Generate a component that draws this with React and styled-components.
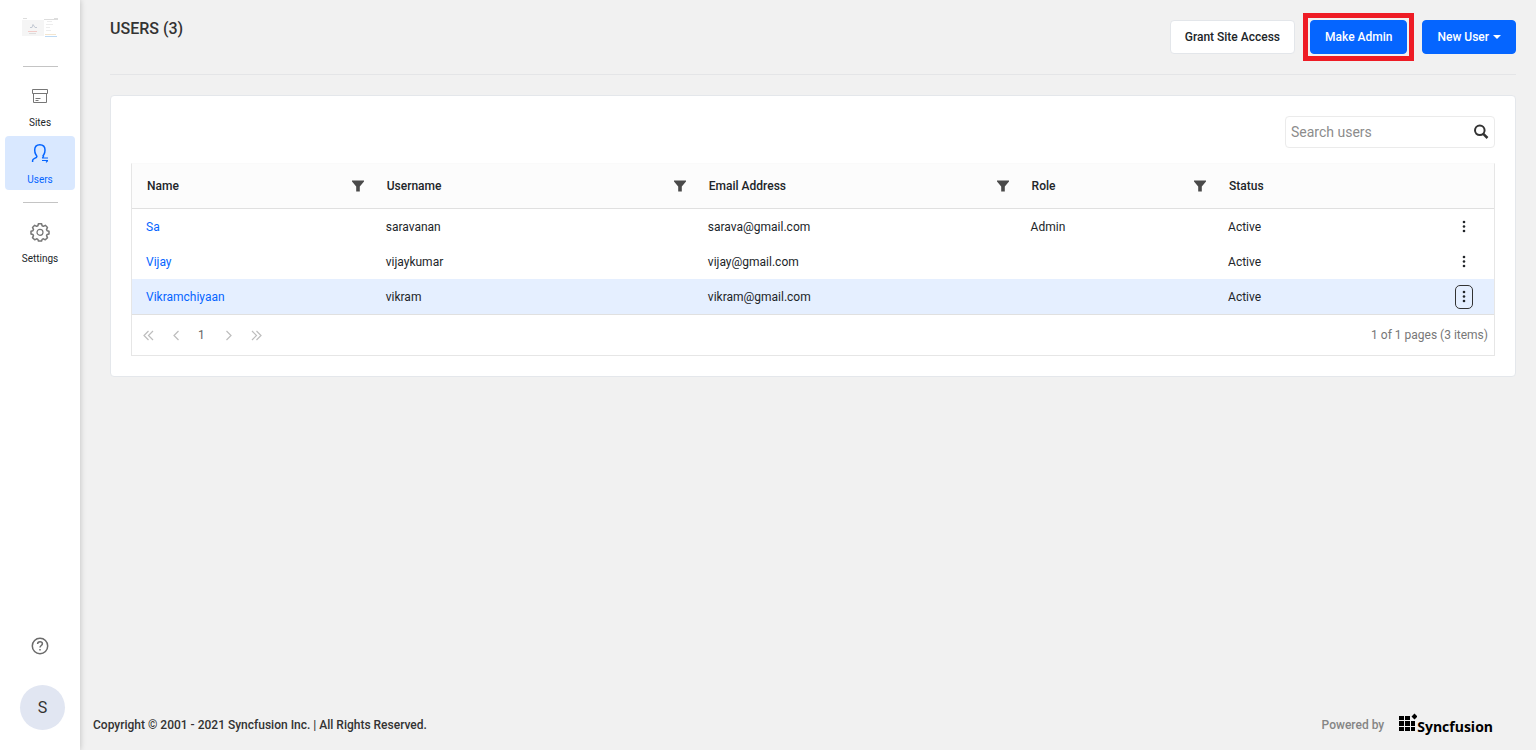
import React from "react";
import styled, { createGlobalStyle, css } from "styled-components";

const GlobalStyle = createGlobalStyle`
  *, *::before, *::after { box-sizing: border-box; }
  body {
    margin: 0;
    background: #fff;
    color: #212529;
    font-family: Roboto, "Liberation Sans", sans-serif;
    font-size: 12px;
    line-height: 16px;
  }
  button, input { font-family: inherit; }
`;

const Shell = styled.div`
  display: flex;
  min-height: calc(100vh - 3px);
  background: #f1f1f1;
`;

const Sidebar = styled.nav`
  position: relative;
  display: flex;
  flex-direction: column;
  align-items: center;
  flex: none;
  width: 80px;
  padding: 18px 0 20px;
  background: #fff;
  box-shadow: 0 0 6px rgba(0, 0, 0, 0.22);
  clip-path: inset(0 -8px 0 0);
`;

const LogoLink = styled.a`
  display: block;
  height: 20px;
  margin-bottom: 16px;
`;

const Divider = styled.hr`
  width: 35px;
  height: 1px;
  margin: 12px 0;
  border: 0;
  background: #c4c4c4;
`;

const NavItem = styled.a`
  display: flex;
  flex-direction: column;
  align-items: center;
  justify-content: space-between;
  width: 70px;
  height: 54px;
  padding: 7px 0 3px;
  border-radius: 4px;
  font-size: 10px;
  line-height: 14px;
  text-decoration: none;
  color: ${(p) => (p.$active ? "#0565ff" : "#212529")};
  background: ${(p) => (p.$active ? "#d9e8ff" : "transparent")};

  & + & { margin-top: 3px; }
`;

const HelpLink = styled.a`
  display: block;
  height: 18px;
  margin-top: auto;
`;

const Avatar = styled.button`
  align-self: flex-start;
  width: 45px;
  height: 45px;
  margin: 30px 0 0 20px;
  padding: 0;
  border: 0;
  border-radius: 50%;
  background: #e1e6f2;
  color: #333;
  font-size: 16px;
`;

const Content = styled.div`
  display: flex;
  flex-direction: column;
  flex: 1;
  min-width: 0;
`;

const Main = styled.main`
  padding: 20px 20px 0 30px;
`;

const PageHeader = styled.header`
  display: flex;
  justify-content: space-between;
  align-items: flex-start;
  padding-bottom: 20px;
  margin-bottom: 20px;
  border-bottom: 1px solid #e4e5e7;
`;

const Title = styled.h1`
  margin: 0;
  font-size: 16px;
  line-height: 18px;
  font-weight: 500;
  color: #333;
`;

const Actions = styled.div`
  display: flex;
  gap: 15px;
`;

const ActionButton = styled.button`
  position: relative;
  display: flex;
  align-items: center;
  gap: 4px;
  height: 34px;
  padding: 0 14px;
  border: 1px solid ${(p) => (p.$primary ? "#0565ff" : "#e3e6ea")};
  border-radius: 4px;
  background: ${(p) => (p.$primary ? "#0565ff" : "#fff")};
  color: ${(p) => (p.$primary ? "#fff" : "#212529")};
  font-size: 12px;
  font-weight: 500;
  white-space: nowrap;

  ${(p) =>
    p.$highlight &&
    css`
      &::after {
        content: "";
        position: absolute;
        inset: -8px;
        border: 5px solid #ee1c25;
      }
    `}
`;

const Caret = styled.span`
  border: 4px solid transparent;
  border-top-color: currentColor;
  border-bottom: 0;
`;

const Card = styled.section`
  padding: 20px;
  border: 1px solid #e4e7eb;
  border-radius: 4px;
  background: #fff;
`;

const SearchBox = styled.label`
  display: flex;
  align-items: center;
  width: 210px;
  height: 32px;
  margin: 0 0 15px auto;
  padding: 0 5px;
  border: 1px solid #ebebeb;
  border-radius: 4px;
`;

const SearchInput = styled.input`
  flex: 1;
  min-width: 0;
  padding: 0;
  border: 0;
  outline: 0;
  background: transparent;
  font-size: 14px;
  color: #212529;

  &::placeholder { color: #8c8c8c; opacity: 1; }
`;

const Grid = styled.div`
  border: 1px solid #e6e6e6;
  border-top-color: #fafafa;
`;

const Table = styled.table`
  width: 100%;
  table-layout: fixed;
  border-collapse: separate;
  border-spacing: 0;
`;

const Col = styled.col`
  width: ${(p) => p.$width};
`;

const HeadCell = styled.th`
  height: 45px;
  padding: 0 8px 0 15px;
  border-bottom: 1px solid #e0e0e0;
  background: #fcfcfc;
  font-weight: 500;
  text-align: left;
`;

const HeadInner = styled.div`
  display: flex;
  align-items: center;
  justify-content: space-between;
`;

const Row = styled.tr`
  background: ${(p) => (p.$selected ? "#e5efff" : "#fff")};
`;

const Cell = styled.td`
  height: 35px;
  padding: 0 14px;
`;

const ActionCell = styled(Cell)`
  padding: 0 21px;
  text-align: right;
`;

const NameLink = styled.a`
  color: #0565ff;
  text-decoration: none;
`;

const MenuButton = styled.button`
  display: inline-flex;
  align-items: center;
  justify-content: center;
  width: 18px;
  height: 24px;
  padding: 0;
  border: 1px solid ${(p) => (p.$focused ? "#333" : "transparent")};
  border-radius: 5px;
  background: transparent;
  color: #212529;
  vertical-align: middle;
`;

const Pager = styled.div`
  display: flex;
  align-items: center;
  justify-content: space-between;
  height: 41px;
  padding: 0 6px 0 10px;
  border-top: 1px solid #e0e0e0;
  color: #777;
`;

const PageButtons = styled.div`
  display: flex;
  align-items: center;
  gap: 16px;
`;

const PageButton = styled.button`
  display: flex;
  align-items: center;
  justify-content: ${(p) => (p.$current ? "flex-start" : "center")};
  width: ${(p) => (p.$current ? "8px" : "12px")};
  height: 20px;
  padding: 0;
  border: 0;
  background: transparent;
  color: ${(p) => (p.$current ? "#666" : "#bdbdbd")};
  font-size: 12px;
`;

const Footer = styled.footer`
  display: flex;
  align-items: center;
  justify-content: space-between;
  height: 24px;
  margin: auto 43px 13px 13px;
  font-weight: 500;
  color: #333;
`;

const Powered = styled.div`
  display: flex;
  align-items: center;
  gap: 15px;
  color: #858585;
`;

const Brand = styled.a`
  display: flex;
  align-items: flex-start;
  color: #000;
  text-decoration: none;
`;

const BrandName = styled.span`
  padding-top: 4px;
  font-family: "Open Sans", sans-serif;
  font-size: 14px;
  font-weight: 700;
  line-height: 20px;
`;

const SiteLogo = () => (
  <svg width="36" height="20" viewBox="0 0 36 20" aria-hidden="true">
    <path d="M0 2h22v16H0z" fill="#f5f5f5" />
    <path d="M22 1.5h14M1 .5h4M32 .5h4" stroke="#ddd" fill="none" />
    <path d="M25 3.5h5M24 6.5h7M24 9.5h4M24 12.5h5" stroke="#ededed" />
    <path d="M8 9.5h2l1-3 2 3h2" stroke="#c3c9d3" fill="none" />
    <path d="M6 13.5h9" stroke="#f2cbc8" />
    <path d="M7 15.5h7" stroke="#ddd" />
    <path d="M23 18.5h12" stroke="#bcd9f4" />
    <path d="M23 16.5h11" stroke="#f3e5cf" />
  </svg>
);

const SitesIcon = () => (
  <svg width="18" height="20" viewBox="0 0 18 20" fill="none" stroke="#777" aria-hidden="true">
    <path d="M1.5 3.5h15v4h-15zM2.5 7.5v9h13v-9M4.5 12.5h5M4.5 14.5h3" />
  </svg>
);

const UsersIcon = () => (
  <svg width="18" height="20" viewBox="0 0 18 20" fill="none" stroke="#0565ff" strokeWidth="1.5" aria-hidden="true">
    <path d="M1.6 19v-1.5c0-1.2.7-1.6 2-2.1 1.6-.6 2.3-1 2.3-1.9 0-.8-.5-1.1-1.1-2C4 10.3 3.700 8.900 3.700 7.100 3.700 3.600 5.800 1.700 8.800 1.700s5.200 1.900 5.200 5.400c0 1.800-.3 3.200-1.100 4.400-.6.900-1 1.300-1 1.900" />
    <path d="M11 15h6M13 13.200 11.200 15M17 17.500h-6M15 19.300l1.800-1.800" strokeWidth="1.100" />
  </svg>
);

const GearIcon = () => (
  <svg width="20" height="20" viewBox="0 0 20 20" fill="none" stroke="#777" strokeWidth="1.500" strokeLinejoin="round" aria-hidden="true">
    <path d="M8.400 1.800h3.200l.5 1.900 1.300.6 1.900-1 2.200 2.200-1 1.900.6 1.300 1.900.5v2.700l-1.900.5-.6 1.300 1 1.900-2.200 2.200-1.900-1-1.300.6-.5 1.600H8.400l-.5-1.600-1.300-.6-1.900 1-2.200-2.200 1-1.900-.6-1.300-1.900-.5V9.200l1.900-.5.6-1.300-1-1.900 2.200-2.200 1.900 1 1.300-.6z" />
    <circle cx="10" cy="10.300" r="3" strokeWidth="1.200" />
  </svg>
);

const HelpIcon = () => (
  <svg width="18" height="18" viewBox="0 0 18 18" fill="none" stroke="#6b6b6b" strokeWidth="1.500" aria-hidden="true">
    <circle cx="9" cy="9" r="7.700" />
    <path d="M6.600 7c0-1.500 1-2.300 2.400-2.300S11.400 5.600 11.400 6.800C11.400 8.500 9 8.500 9 10.600M9 12v1.500" />
  </svg>
);

const SearchIcon = () => (
  <svg width="16" height="16" viewBox="0 0 16 16" fill="none" stroke="#333" aria-hidden="true">
    <circle cx="6.800" cy="6.300" r="4.800" strokeWidth="2" />
    <path d="m10.300 9.800 4.200 4.200" strokeWidth="2.500" />
  </svg>
);

const FilterIcon = () => (
  <svg width="12" height="12" viewBox="0 0 12 12" fill="#4a4a4a" aria-hidden="true">
    <path d="M0 .5h12v1L7.800 6.500v5H4.200v-5L0 1.500z" />
  </svg>
);

const DotsIcon = () => (
  <svg width="4" height="14" viewBox="0 0 4 14" fill="currentColor" aria-hidden="true">
    <circle cx="2" cy="2" r="1.300" />
    <circle cx="2" cy="6.500" r="1.300" />
    <circle cx="2" cy="11" r="1.300" />
  </svg>
);

const arrowPaths = {
  first: "M5.500 1 1 5.500 5.500 10M10 1 5.500 5.500 10 10",
  previous: "M7.500 1 3 5.500 7.500 10",
  next: "M3.500 1 8 5.500 3.500 10",
  last: "M1 1l4.500 4.500L1 10M5.500 1 10 5.500 5.500 10",
};

const ArrowIcon = ({ kind }) => (
  <svg width="11" height="11" viewBox="0 0 11 11" fill="none" stroke="currentColor" strokeWidth="1.200" aria-hidden="true">
    <path d={arrowPaths[kind]} />
  </svg>
);

const BrandMark = () => (
  <svg width="18" height="20" viewBox="0 0 18 20" fill="#000" aria-hidden="true">
    <path d="M0 3h5v4H0zM6 3h5v4H6zM0 8h5v5H0zM6 8h5v5H6zM12 8h4v5h-4zM0 14h5v4H0zM6 14h5v4H6zM12 14h4v4h-4zM15.500 .500l3 3-3 3-3-3z" />
  </svg>
);

const columns = [
  { label: "Name", width: "17.600%", filter: true },
  { label: "Username", width: "23.650%", filter: true },
  { label: "Email Address", width: "23.700%", filter: true },
  { label: "Role", width: "14.500%", filter: true },
  { label: "Status", width: "9.200%" },
  { label: "", width: "auto" },
];

const users = [
  { name: "Sa", username: "saravanan", email: "sarava@gmail.com", role: "Admin", status: "Active" },
  { name: "Vijay", username: "vijaykumar", email: "vijay@gmail.com", role: "", status: "Active" },
  { name: "Vikramchiyaan", username: "vikram", email: "vikram@gmail.com", role: "", status: "Active", selected: true },
];

export default function App() {
  return (
    <>
      <GlobalStyle />
      <Shell>
        <Sidebar aria-label="Main">
          <LogoLink href="#home" aria-label="Home"><SiteLogo /></LogoLink>
          <Divider />
          <NavItem href="#sites"><SitesIcon />Sites</NavItem>
          <NavItem href="#users" $active aria-current="page"><UsersIcon />Users</NavItem>
          <Divider />
          <NavItem href="#settings"><GearIcon />Settings</NavItem>
          <HelpLink href="#help" aria-label="Help"><HelpIcon /></HelpLink>
          <Avatar type="button">S</Avatar>
        </Sidebar>
        <Content>
          <Main>
            <PageHeader>
              <Title>USERS (3)</Title>
              <Actions>
                <ActionButton type="button">Grant Site Access</ActionButton>
                <ActionButton type="button" $primary $highlight>Make Admin</ActionButton>
                <ActionButton type="button" $primary>New User<Caret /></ActionButton>
              </Actions>
            </PageHeader>
            <Card>
              <SearchBox>
                <SearchInput type="text" placeholder="Search users" aria-label="Search users" />
                <SearchIcon />
              </SearchBox>
              <Grid>
                <Table>
                  <colgroup>
                    {columns.map((c) => <Col key={c.label} $width={c.width} />)}
                  </colgroup>
                  <thead>
                    <tr>
                      {columns.map((c) => (
                        <HeadCell key={c.label} scope="col">
                          <HeadInner>{c.label}{c.filter && <FilterIcon />}</HeadInner>
                        </HeadCell>
                      ))}
                    </tr>
                  </thead>
                  <tbody>
                    {users.map((u) => (
                      <Row key={u.name} $selected={u.selected}>
                        <Cell><NameLink href={"#" + u.username}>{u.name}</NameLink></Cell>
                        <Cell>{u.username}</Cell>
                        <Cell>{u.email}</Cell>
                        <Cell>{u.role}</Cell>
                        <Cell>{u.status}</Cell>
                        <ActionCell>
                          <MenuButton type="button" $focused={u.selected} aria-label={"Actions for " + u.name}>
                            <DotsIcon />
                          </MenuButton>
                        </ActionCell>
                      </Row>
                    ))}
                  </tbody>
                </Table>
                <Pager>
                  <PageButtons>
                    <PageButton type="button" aria-label="First page"><ArrowIcon kind="first" /></PageButton>
                    <PageButton type="button" aria-label="Previous page"><ArrowIcon kind="previous" /></PageButton>
                    <PageButton type="button" $current>1</PageButton>
                    <PageButton type="button" aria-label="Next page"><ArrowIcon kind="next" /></PageButton>
                    <PageButton type="button" aria-label="Last page"><ArrowIcon kind="last" /></PageButton>
                  </PageButtons>
                  <span>1 of 1 pages (3 items)</span>
                </Pager>
              </Grid>
            </Card>
          </Main>
          <Footer>
            <span>Copyright © 2001 - 2021 Syncfusion Inc. | All Rights Reserved.</span>
            <Powered>
              Powered by
              <Brand href="#syncfusion"><BrandMark /><BrandName>Syncfusion</BrandName></Brand>
            </Powered>
          </Footer>
        </Content>
      </Shell>
    </>
  );
}
